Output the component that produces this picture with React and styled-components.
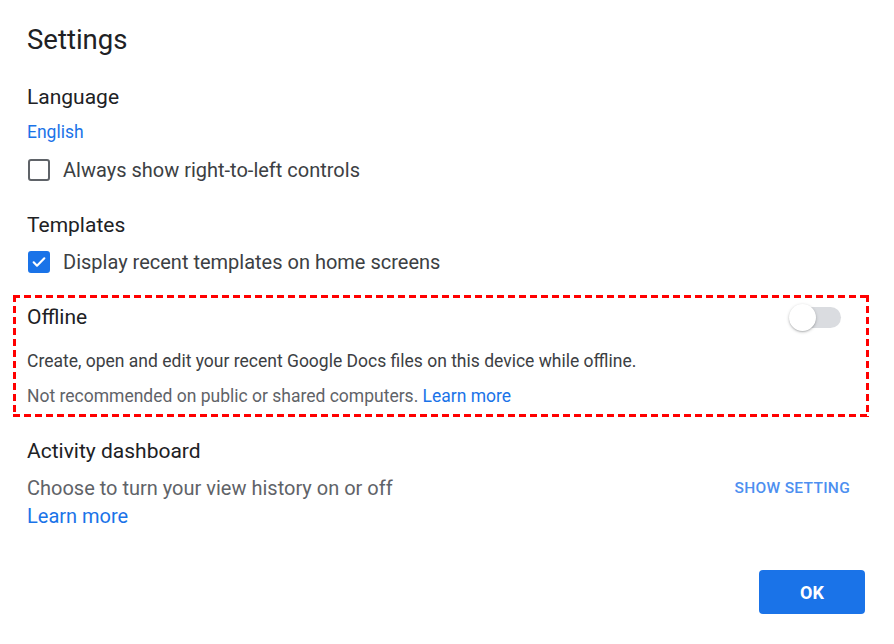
import React from 'react';
import styled, { createGlobalStyle } from 'styled-components';

const GlobalStyle = createGlobalStyle`
  html, body {
    margin: 0;
    padding: 0;
    background: #fff;
  }
  body {
    font-family: Roboto, "Liberation Sans", Arial, sans-serif;
    -webkit-font-smoothing: antialiased;
  }
`;

const Dialog = styled.div`
  width: 894px;
  height: 644px;
  box-sizing: border-box;
  padding: 22px 25px 0 27px;
  display: flex;
  flex-direction: column;
`;

const Title = styled.h1`
  margin: 0;
  font-size: 27.5px;
  font-weight: 400;
  line-height: 36px;
  color: #202124;
`;

const Section = styled.section`
  display: flex;
  flex-direction: column;
  margin-top: ${(p) => p.$top || 0}px;
`;

const Heading = styled.h2`
  margin: 0;
  font-size: 21px;
  font-weight: 400;
  line-height: 28px;
  color: #202124;
`;

const LinkText = styled.a`
  color: #1a73e8;
  text-decoration: none;
  font-size: inherit;
  line-height: inherit;
  cursor: pointer;
`;

const LangLink = styled(LinkText)`
  margin-top: 9px;
  font-size: 17.5px;
  line-height: 24px;
`;

const BlockLink = styled(LinkText)`
  font-size: 20px;
  line-height: 28px;
`;

const CheckRow = styled.label`
  display: flex;
  align-items: center;
  gap: 13px;
  margin-top: ${(p) => p.$top || 0}px;
  font-size: 20px;
  line-height: 28px;
  color: #3c4043;
  cursor: pointer;
`;

const Box = styled.span`
  width: 22px;
  height: 22px;
  box-sizing: border-box;
  margin-left: 1px;
  border-radius: 3px;
  border: 2px solid ${(p) => (p.$checked ? '#1a73e8' : '#5f6368')};
  background: ${(p) => (p.$checked ? '#1a73e8' : '#fff')};
  display: flex;
  align-items: center;
  justify-content: center;
  flex-shrink: 0;
`;

const dashH = 'linear-gradient(90deg, #ff0000 7px, transparent 7px)';
const dashV = 'linear-gradient(180deg, #ff0000 7px, transparent 7px)';

const Highlight = styled.div`
  margin: 19px 0 0 -14px;
  padding: 8px 28px 9px 14px;
  display: flex;
  flex-direction: column;
  background:
    ${dashH} left top / 11px 3px repeat-x,
    ${dashH} left bottom / 11px 3px repeat-x,
    ${dashV} left top / 3px 11px repeat-y,
    ${dashV} right top / 3px 11px repeat-y;
`;

const HeadRow = styled.div`
  display: flex;
  align-items: center;
  justify-content: space-between;
`;

const Toggle = styled.span`
  position: relative;
  width: 49px;
  height: 21px;
  border-radius: 11px;
  background: #dadce0;
`;

const Thumb = styled.span`
  position: absolute;
  left: -3px;
  top: -3px;
  width: 27px;
  height: 27px;
  border-radius: 50%;
  background: #fff;
  box-shadow: 0 1px 3px rgba(60, 64, 67, 0.35), 0 1px 1px rgba(60, 64, 67, 0.12);
`;

const Body = styled.p`
  margin: ${(p) => p.$top || 0}px 0 0;
  font-size: ${(p) => p.$size || 17.5}px;
  line-height: ${(p) => p.$lh || 24}px;
  color: ${(p) => (p.$muted ? '#5f6368' : '#3c4043')};
`;

const ActionRow = styled.div`
  display: flex;
  align-items: center;
  justify-content: space-between;
  margin-top: 9px;
`;

const TextButton = styled.button`
  border: none;
  background: none;
  padding: 0;
  margin-right: 19px;
  font-family: inherit;
  font-size: 15.5px;
  font-weight: 500;
  letter-spacing: 0.3px;
  color: #4d8ff0;
  text-transform: uppercase;
  cursor: pointer;
`;

const Footer = styled.div`
  display: flex;
  justify-content: flex-end;
  margin-top: 40px;
`;

const OkButton = styled.button`
  width: 106px;
  height: 44px;
  margin-right: 4px;
  border: none;
  border-radius: 4px;
  background: #1a73e8;
  color: #fff;
  font-family: inherit;
  font-size: 18px;
  font-weight: 700;
  cursor: pointer;
`;

function Check() {
  return (
    <svg width="16" height="16" viewBox="0 0 24 24">
      <path d="M4 12.5l5 5L20 6.5" fill="none" stroke="#fff" strokeWidth="3.2" strokeLinecap="round" strokeLinejoin="round" />
    </svg>
  );
}

export default function App() {
  return (
    <>
      <GlobalStyle />
      <Dialog>
        <Title>Settings</Title>

        <Section $top={25}>
          <Heading>Language</Heading>
          <LangLink>English</LangLink>
          <CheckRow $top={12}>
            <Box />
            Always show right-to-left controls
          </CheckRow>
        </Section>

        <Section $top={27}>
          <Heading>Templates</Heading>
          <CheckRow $top={9}>
            <Box $checked>
              <Check />
            </Box>
            Display recent templates on home screens
          </CheckRow>
        </Section>

        <Highlight>
          <HeadRow>
            <Heading>Offline</Heading>
            <Toggle>
              <Thumb />
            </Toggle>
          </HeadRow>
          <Body $top={18}>
            Create, open and edit your recent Google Docs files on this device while offline.
          </Body>
          <Body $top={11} $muted>
            Not recommended on public or shared computers. <LinkText>Learn more</LinkText>
          </Body>
        </Highlight>

        <Section $top={20}>
          <Heading>Activity dashboard</Heading>
          <ActionRow>
            <Body $size={20} $lh={28} $muted>Choose to turn your view history on or off</Body>
            <TextButton>Show setting</TextButton>
          </ActionRow>
          <BlockLink>Learn more</BlockLink>
        </Section>

        <Footer>
          <OkButton>OK</OkButton>
        </Footer>
      </Dialog>
    </>
  );
}
